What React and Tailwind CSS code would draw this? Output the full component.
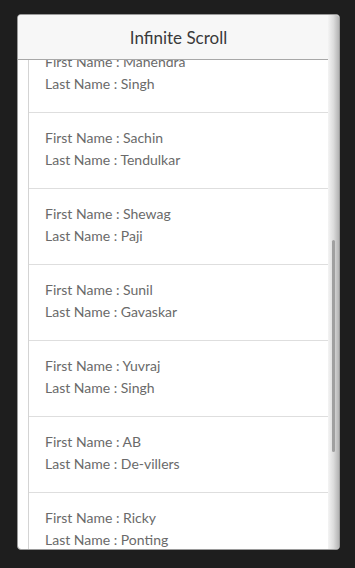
const people = [
  { first: "Mahendra", last: "Singh" },
  { first: "Sachin", last: "Tendulkar" },
  { first: "Shewag", last: "Paji" },
  { first: "Sunil", last: "Gavaskar" },
  { first: "Yuvraj", last: "Singh" },
  { first: "AB", last: "De-villers" },
  { first: "Ricky", last: "Ponting" },
  { first: "Rahul", last: "Dravid" },
];

export default function App() {
  return (
    <div className="min-h-[568px] h-[568px] bg-[#1e1e1e] pt-[14px] pl-[17px] font-['Segoe_UI','Lato','Noto_Sans',sans-serif]">
      <div className="relative w-[323px] h-[536px] bg-white border border-[#9a9a9a] rounded-[4px] overflow-hidden flex flex-col">
        <header className="h-[45px] shrink-0 bg-[#f7f7f7] border-b border-[#a8a8a8] flex items-center justify-center">
          <h1 className="text-[17px] text-[#3a3a3a] leading-none">Infinite Scroll</h1>
        </header>

        <div className="flex-1 overflow-hidden">
          <ul className="mt-[-23px] ml-[10px] w-[302px] border-x border-[#d4d4d4]">
            {people.map((p, i) => (
              <li
                key={i}
                className="h-[76px] border-b border-[#dedede] pl-[16px] pt-[14px] text-[14px] leading-[22px] text-[#6a6a6a]"
              >
                <p>First Name : {p.first}</p>
                <p>Last Name : {p.last}</p>
              </li>
            ))}
          </ul>
        </div>

        {/* right edge shading + scroll thumb */}
        <div className="pointer-events-none absolute top-0 right-0 h-full w-[11px] bg-gradient-to-r from-[#f4f4f4] via-[#dcdcdc] to-[#b4b4b4]" />
        <div className="pointer-events-none absolute right-[4px] top-[225px] w-[3px] h-[212px] bg-[#a0a0a0] rounded-full" />
      </div>
    </div>
  );
}
